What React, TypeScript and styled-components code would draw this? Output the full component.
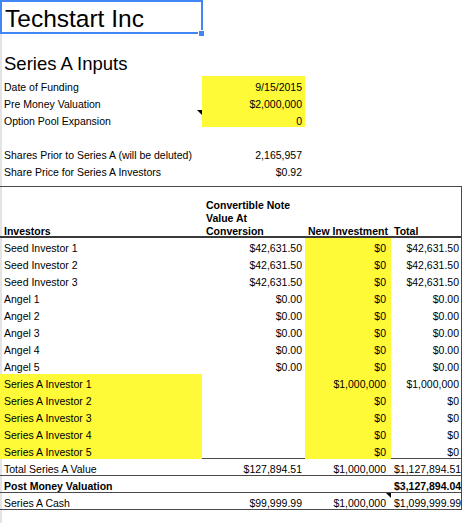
import React from 'react';
import styled, { createGlobalStyle, css } from 'styled-components';

const GlobalStyle = createGlobalStyle`
  html, body { margin: 0; padding: 0; background: #fff; }
  body { font-family: "Liberation Sans", Arial, sans-serif; color: #000; }
`;

const YELLOW = '#fffa38';
const LINE = '#4a4a4a';

const Page = styled.div`
  width: 474px;
  height: 523px;
  overflow: hidden;
  background: linear-gradient(to right, #e4e4e4 2px, #fff 2px);
`;

const TitleCell = styled.div`
  position: relative;
  box-sizing: border-box;
  width: 203px;
  height: 34px;
  border: 2px solid #4285f4;
  background: #fff;
  padding: 2px 0 0 3px;
  font-size: 24.5px;
  line-height: 30px;
  white-space: nowrap;
`;

const Handle = styled.span`
  position: absolute;
  right: -4px;
  bottom: -5px;
  width: 5px;
  height: 5px;
  background: #4285f4;
  border: 1px solid #fff;
`;

const Heading = styled.div`
  height: 42px;
  box-sizing: border-box;
  display: flex;
  align-items: flex-end;
  padding: 0 0 2px 4px;
  font-size: 18.5px;
  line-height: 20px;
`;

const Row = styled.div<{ $h?: number; $line?: boolean; $pt?: number }>`
  display: grid;
  grid-template-columns: 202px 103px 86px 1fr;
  height: ${p => p.$h ?? 17}px;
  box-sizing: border-box;
  ${p => p.$line && css`border-bottom: 1px solid ${LINE};`}
  & > * {
    padding-top: ${p => p.$pt ?? 2}px;
    line-height: ${p => 17 - (p.$pt ?? 2)}px;
  }
`;

const Cell = styled.div<{ $right?: boolean; $yellow?: boolean; $bold?: boolean; $note?: boolean }>`
  position: relative;
  padding-left: 3px;
  padding-right: 3px;
  font-size: 10.5px;
  white-space: nowrap;
  overflow: visible;
  text-align: ${p => (p.$right ? 'right' : 'left')};
  background: ${p => (p.$yellow ? YELLOW : 'transparent')};
  font-weight: ${p => (p.$bold ? 700 : 400)};
  &:first-child { padding-left: 4px; }
  &:nth-child(3) { padding-right: 5px; }
  &:nth-child(4) { padding-right: 2px; }
  ${p =>
    p.$note &&
    css`
      &::after {
        content: '';
        position: absolute;
        top: 0;
        right: 0;
        border-top: 5px solid #000;
        border-left: 5px solid transparent;
      }
    `}
`;

const Table = styled.div`
  width: 462px;
  box-sizing: border-box;
  border-top: 1px solid ${LINE};
  border-right: 1px solid ${LINE};
  margin-top: 7px;
`;

const HeadRow = styled.div`
  display: grid;
  grid-template-columns: 202px 103px 86px 1fr;
  height: 51px;
  box-sizing: border-box;
  align-items: end;
  border-bottom: 2px solid #3a3a3a;
`;

const HeadCell = styled.div`
  padding: 0 3px;
  margin-bottom: -2px;
  font-size: 10.5px;
  line-height: 13px;
  font-weight: 700;
  white-space: nowrap;
  &:first-child { padding-left: 4px; }
  &:nth-child(2) { padding-left: 4px; }
`;

type Inv = { name: string; conv: string; inv: string; total: string; yellowName?: boolean };

const investors: Inv[] = [
  { name: 'Seed Investor 1', conv: '$42,631.50', inv: '$0', total: '$42,631.50' },
  { name: 'Seed Investor 2', conv: '$42,631.50', inv: '$0', total: '$42,631.50' },
  { name: 'Seed Investor 3', conv: '$42,631.50', inv: '$0', total: '$42,631.50' },
  { name: 'Angel 1', conv: '$0.00', inv: '$0', total: '$0.00' },
  { name: 'Angel 2', conv: '$0.00', inv: '$0', total: '$0.00' },
  { name: 'Angel 3', conv: '$0.00', inv: '$0', total: '$0.00' },
  { name: 'Angel 4', conv: '$0.00', inv: '$0', total: '$0.00' },
  { name: 'Angel 5', conv: '$0.00', inv: '$0', total: '$0.00' },
  { name: 'Series A Investor 1', conv: '', inv: '$1,000,000', total: '$1,000,000', yellowName: true },
  { name: 'Series A Investor 2', conv: '', inv: '$0', total: '$0', yellowName: true },
  { name: 'Series A Investor 3', conv: '', inv: '$0', total: '$0', yellowName: true },
  { name: 'Series A Investor 4', conv: '', inv: '$0', total: '$0', yellowName: true },
  { name: 'Series A Investor 5', conv: '', inv: '$0', total: '$0', yellowName: true },
];

export default function App() {
  return (
    <Page>
      <GlobalStyle />
      <TitleCell>
        Techstart Inc
        <Handle />
      </TitleCell>
      <Heading>Series A Inputs</Heading>

      <Row $pt={5}>
        <Cell>Date of Funding</Cell>
        <Cell $right $yellow>9/15/2015</Cell>
      </Row>
      <Row $pt={5}>
        <Cell>Pre Money Valuation</Cell>
        <Cell $right $yellow>$2,000,000</Cell>
      </Row>
      <Row $pt={5}>
        <Cell $note>Option Pool Expansion</Cell>
        <Cell $right $yellow>0</Cell>
      </Row>
      <Row $h={18} />
      <Row $pt={4}>
        <Cell>Shares Prior to Series A (will be deluted)</Cell>
        <Cell $right>2,165,957</Cell>
      </Row>
      <Row $pt={4}>
        <Cell>Share Price for Series A Investors</Cell>
        <Cell $right>$0.92</Cell>
      </Row>

      <Table>
        <HeadRow>
          <HeadCell>Investors</HeadCell>
          <HeadCell>
            Convertible Note
            <br />
            Value At
            <br />
            Conversion
          </HeadCell>
          <HeadCell>New Investment</HeadCell>
          <HeadCell>Total</HeadCell>
        </HeadRow>
        {investors.map((r, i) => (
          <Row key={r.name} $pt={4} $line={i === investors.length - 1}>
            <Cell $yellow={r.yellowName}>{r.name}</Cell>
            <Cell $right>{r.conv}</Cell>
            <Cell $right $yellow>{r.inv}</Cell>
            <Cell $right>{r.total}</Cell>
          </Row>
        ))}
        <Row $line $pt={3}>
          <Cell>Total Series A Value</Cell>
          <Cell $right>$127,894.51</Cell>
          <Cell $right>$1,000,000</Cell>
          <Cell $right>$1,127,894.51</Cell>
        </Row>
        <Row $line $pt={3}>
          <Cell $bold>Post Money Valuation</Cell>
          <Cell />
          <Cell />
          <Cell $right $bold>$3,127,894.04</Cell>
        </Row>
        <Row $line $pt={3}>
          <Cell>Series A Cash</Cell>
          <Cell $right>$99,999.99</Cell>
          <Cell $right $note>$1,000,000</Cell>
          <Cell $right>$1,099,999.99</Cell>
        </Row>
      </Table>
    </Page>
  );
}
